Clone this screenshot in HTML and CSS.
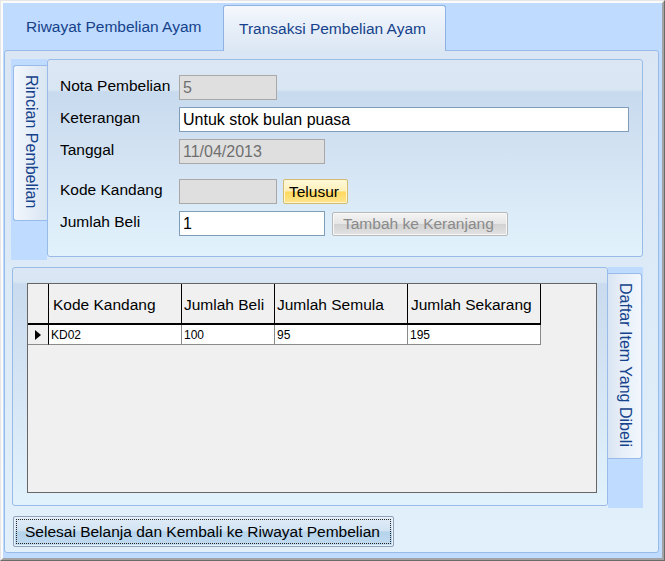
FILE: index.html
```html
<!DOCTYPE html>
<html>
<head>
<meta charset="utf-8">
<link rel="stylesheet" href="styles.css">
</head>
<body>
<div class="window">
  <div class="frame">
    <div class="tabstrip">
      <div class="tab">Riwayat Pembelian Ayam</div>
      <div class="tab active">Transaksi Pembelian Ayam</div>
    </div>
    <div class="page">
      <div class="section section-top">
        <div class="vstrip vstrip-left">
          <div class="vtab vtab-left"><span class="vtext">Rincian Pembelian</span></div>
        </div>
        <div class="panel form-panel">
          <div class="row">
            <div class="label">Nota Pembelian</div>
            <div class="box disabled w-short">5</div>
          </div>
          <div class="row">
            <div class="label">Keterangan</div>
            <div class="box w-long">Untuk stok bulan puasa</div>
          </div>
          <div class="row">
            <div class="label">Tanggal</div>
            <div class="box disabled w-mid">11/04/2013</div>
          </div>
          <div class="row row-gap">
            <div class="label">Kode Kandang</div>
            <div class="box disabled w-short"></div>
            <div class="btn btn-yellow">Telusur</div>
          </div>
          <div class="row">
            <div class="label">Jumlah Beli</div>
            <div class="box w-mid">1</div>
            <div class="btn btn-disabled">Tambah ke Keranjang</div>
          </div>
        </div>
      </div>
      <div class="section section-bottom">
        <div class="panel grid-panel">
          <div class="grid">
            <div class="cell rh head"></div>
            <div class="cell head c1">Kode Kandang</div>
            <div class="cell head c2">Jumlah Beli</div>
            <div class="cell head c3">Jumlah Semula</div>
            <div class="cell head c4">Jumlah Sekarang</div>
            <div class="cell rh data"><span class="arrow"></span></div>
            <div class="cell data">KD02</div>
            <div class="cell data">100</div>
            <div class="cell data">95</div>
            <div class="cell data">195</div>
          </div>
        </div>
        <div class="vstrip vstrip-right">
          <div class="vtab vtab-right"><span class="vtext">Daftar Item Yang Dibeli</span></div>
        </div>
      </div>
      <div class="finish"><span class="focus">Selesai Belanja dan Kembali ke Riwayat Pembelian</span></div>
    </div>
  </div>
</div>
</body>
</html>
```
FILE: styles.css
```css
* { box-sizing: border-box; }
html, body { margin: 0; padding: 0; }
body {
  font-family: "Liberation Sans", Arial, sans-serif;
  font-size: 15.5px;
  color: #000;
  background: #bfdbff;
}
.window {
  width: 665px;
  height: 561px;
  border: 1px solid;
  border-color: #e6e6e6 #6b6b6b #6b6b6b #e6e6e6;
}
.frame {
  width: 100%;
  height: 100%;
  border: 2px solid;
  border-color: #fbfbfb #a3a3a3 #a3a3a3 #fbfbfb;
  background: #bfdbff;
}
.tabstrip {
  display: flex;
  align-items: flex-end;
  height: 47px;
}
.tab {
  color: #15428b;
  height: 44px;
  width: 215px;
  margin-left: 5px;
  padding-left: 18px;
  padding-bottom: 3px;
  display: flex;
  align-items: center;
}
.tab.active {
  margin-left: 0;
  width: 223px;
  height: 46px;
  margin-bottom: -1px;
  padding-left: 15px;
  padding-bottom: 0;
  position: relative;
  z-index: 2;
  border: 1px solid #8db2e3;
  border-bottom: none;
  border-radius: 3px 3px 0 0;
  background: linear-gradient(#f5f9fd, #e9f0f9 40%, #dce7f4);
}
.page {
  margin-left: 1px;
  width: 655px;
  height: 503px;
  border: 1px solid #99bbe8;
  border-radius: 3px;
  background: linear-gradient(#dbe6f4, #dce9f6 40%, #e1f0fb);
  padding: 8px 0 0 6px;
}
.section { display: flex; }
.section-top { height: 201px; }
.vstrip {
  width: 36px;
  background: #bfdbff;
}
.vstrip-left { height: 201px; }
.vtab {
  width: 34px;
  border: 1px solid #99bbe8;
  color: #15428b;
  font-size: 16px;
  display: flex;
  justify-content: center;
  padding-top: 9px;
}
.vtext { writing-mode: vertical-rl; }
.vtab-left {
  margin-top: 6px;
  margin-left: 2px;
  height: 156px;
  border-right: none;
  border-radius: 3px 0 0 3px;
  background: linear-gradient(to right, #f2f7fc, #e3ecf7 60%, #d9e5f3);
}
.panel {
  border: 1px solid #99bbe8;
  border-radius: 3px;
  background: linear-gradient(#dce7f4 0, #d8e5f3 30px, #c8daee 32px, #d3e3f3 50%, #e2f2fc 100%);
}
.form-panel {
  width: 596px;
  height: 198px;
  padding: 15px 0 0 12px;
  display: flex;
  flex-direction: column;
}
.row {
  display: flex;
  align-items: center;
  height: 25px;
  margin-bottom: 7px;
}
.row-gap { margin-top: 8px; }
.label {
  width: 119px;
  padding-bottom: 3px;
  white-space: nowrap;
}
.box {
  height: 25px;
  border: 1px solid #7f9db9;
  background: #fff;
  font-size: 16px;
  line-height: 23px;
  padding-left: 3px;
  white-space: nowrap;
}
.box.disabled {
  background: #dfdfdf;
  border-color: #a8a8a8;
  color: #6f6f6f;
}
.w-short { width: 98px; }
.w-mid { width: 146px; }
.w-long { width: 450px; }
.btn {
  height: 25px;
  display: flex;
  align-items: center;
  white-space: nowrap;
}
.btn-yellow {
  margin-left: 6px;
  width: 65px;
  padding-left: 5px;
  border: 1px solid #d4bb72;
  border-radius: 2px;
  background: linear-gradient(#fff9dc 0%, #fff0b5 48%, #ffd85f 52%, #ffe58e 100%);
  box-shadow: inset 0 0 0 1px #fff6d0;
}
.btn-disabled {
  margin-left: 7px;
  width: 176px;
  height: 24px;
  margin-top: 1px;
  padding-left: 10px;
  color: #8a8a8a;
  border: 1px solid #b9b9b9;
  border-radius: 2px;
  background: linear-gradient(#f4f4f4 0%, #e6e6e6 48%, #d2d2d2 52%, #e2e2e2 100%);
  box-shadow: inset 0 0 0 1px #f7f7f7;
}
.section-bottom {
  margin-top: 7px;
  margin-left: 1px;
  height: 241px;
}
.grid-panel {
  width: 596px;
  height: 239px;
  padding: 15px 0 0 14px;
  background: linear-gradient(#dce7f4 0, #d8e5f3 14px, #cadbef 16px, #d5e5f4 50%, #e2f2fc 100%);
}
.vstrip-right {
  width: 35px;
  height: 241px;
}
.vtab-right {
  margin-top: 6px;
  height: 186px;
  border-left: none;
  border-radius: 0 3px 3px 0;
  background: linear-gradient(to right, #d9e5f3, #e6eef8 40%, #f2f7fc);
}
.grid {
  width: 570px;
  height: 210px;
  border: 1px solid #666;
  background: #f0f0f0;
  display: grid;
  grid-template-columns: 21px 133px 93px 133px 133px;
  grid-template-rows: 41px 20px;
  align-content: start;
}
.cell {
  display: flex;
  align-items: center;
  white-space: nowrap;
  overflow: hidden;
}
.head {
  border-right: 1px solid #000;
  border-bottom: 2px solid #000;
  padding-left: 3px;
  padding-top: 2px;
}
.head.c1 { padding-left: 4px; }
.head.c2, .head.c3 { padding-left: 2px; }
.data {
  background: #fff;
  border-right: 1px solid #8a8a8a;
  border-bottom: 1px solid #8a8a8a;
  font-size: 12px;
  padding-left: 2px;
}
.rh.data {
  background: #f0f0f0;
  border-right: 1px solid #000;
  justify-content: center;
  padding-left: 0;
}
.arrow {
  width: 0;
  height: 0;
  border-left: 6px solid #000;
  border-top: 5px solid transparent;
  border-bottom: 5px solid transparent;
}
.finish {
  margin-top: 8px;
  margin-left: 2px;
  width: 381px;
  height: 31px;
  border: 1px solid #8ea3ba;
  border-radius: 2px;
  background: linear-gradient(#e1ecf7 0%, #d3e4f3 46%, #b5d3ec 52%, #c3dcf0 100%);
  box-shadow: inset 0 0 0 1px #e9f2fb;
  padding: 2px;
}
.focus {
  display: flex;
  align-items: center;
  height: 100%;
  border: 1px dotted #222;
  padding-left: 8px;
  white-space: nowrap;
}
```
